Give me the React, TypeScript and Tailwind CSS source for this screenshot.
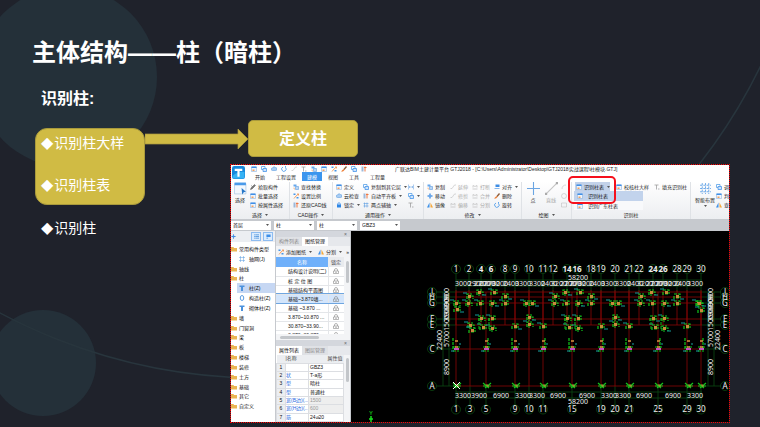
import React from 'react';
import clsx from 'clsx';

type Glyph =
  | 'window' | 'pencil' | 'copy' | 'cloud' | 'lock' | 'swap' | 'plates' | 'grid' | 'move'
  | 'mirror' | 'line' | 'cut' | 'align' | 'rotate' | 'brush' | 'text' | 'span' | 'find' | 'arc' | 'circle' | 'rect';

const glyphs: Record<Glyph, React.ReactNode> = {
  window: (
    <>
      <path d="M1 2h10v9H1z" fill="#eef5fd" stroke="#7fa9d8" />
      <path d="M1 1h10v3H1z" fill="#3f8fe8" />
      <path d="M3 7h4v3H3z" fill="#f3a15e" />
    </>
  ),
  pencil: <path d="M1 11l3-1 7-7-2-2-7 7zM2 3l3 2" fill="#777" stroke="#555" />,
  copy: (
    <>
      <path d="M1 1h7v6H1z" fill="#fff" stroke="#4d9be6" strokeWidth="1.5" />
      <path d="M4 5h7v6H4z" fill="#cfe5fa" stroke="#3f8fe8" strokeWidth="1.5" />
    </>
  ),
  cloud: <path d="M3 9a2.5 2.5 0 010-5 3.500 3.500 0 016-1 3 3 0 010 6z" fill="#a9cdf3" stroke="#4d93dc" />,
  lock: (
    <>
      <path d="M3.500 6V4a2.500 2.500 0 015 0v2" fill="none" stroke="#3f8fe8" strokeWidth="1.500" />
      <path d="M2 5h8v6H2z" fill="#2d86e6" />
    </>
  ),
  swap: (
    <>
      <path d="M1 1h4v3H1zM7 8h4v3H7z" fill="#4495e8" />
      <path d="M2 11l4-5 5-4M8 2h3v3" fill="none" stroke="#f08a3c" strokeWidth="1.500" />
    </>
  ),
  plates: (
    <>
      <path d="M1 1h4v10H1z" fill="#9cb9da" />
      <path d="M8 1v10M6 3h5" stroke="#ee7641" strokeWidth="2" />
    </>
  ),
  grid: <path d="M3 1v10M8 1v10M1 3h10M1 8h10" stroke="#5b9ce0" strokeWidth="1.200" fill="none" />,
  move: <path d="M6 0l2 3H7v2h2V4l3 2-3 2V7H7v2h1l-2 3-2-3h1V7H3v1L0 6l3-2v1h2V3H4z" fill="#3c8ce4" />,
  mirror: (
    <>
      <path d="M5 1v10H0z" fill="#3f91e8" />
      <path d="M7 1v10h5z" fill="#f6a83b" />
    </>
  ),
  line: <path d="M1 9h3l5-7M9 2h3" stroke="#b3b3b3" fill="none" />,
  cut: <path d="M1 10h10M2 7V3l4 2 4-2v4" stroke="#b3b3b3" fill="none" strokeWidth="1.200" />,
  align: (
    <>
      <path d="M3 1h8v5H3z" fill="#3c8ce4" />
      <path d="M1 8h10v2H1z" fill="#87b8ec" />
    </>
  ),
  rotate: <path d="M4 2a4.500 4.500 0 105 1M9 3V0" stroke="#4798e8" fill="none" strokeWidth="1.700" />,
  brush: (
    <>
      <path d="M5 6l5-6 2 2-5 6z" fill="#8b5a36" />
      <path d="M0 11l5-5 2 2-3 3z" fill="#ee7a2f" />
    </>
  ),
  text: <path d="M1 2h8M5 2v9M8 10h3" stroke="#999" strokeWidth="1.500" fill="none" />,
  span: <path d="M1 1v10M11 1v10M2 6h8M4 4L2 6l2 2M8 4l2 2-2 2" stroke="#5a9be0" fill="none" />,
  find: (
    <>
      <path d="M1 1h6v4H1z" fill="#64a7ec" />
      <path d="M5 5h6v6H5z" fill="#b7d5f5" stroke="#4b8fd9" />
      <path d="M2 7v3h2" stroke="#f08a3c" fill="none" />
    </>
  ),
  arc: <path d="M2 10c0-5 3-8 8-8" stroke="#b5b5b5" fill="none" />,
  circle: <circle cx="6" cy="6" r="5" stroke="#b5b5b5" fill="none" />,
  rect: <path d="M1 2h10v8H1z" stroke="#b5b5b5" fill="none" />,
};

const Icon: React.FC<{ name: Glyph; className?: string }> = ({ name, className }) => (
  <svg viewBox="0 0 12 12" className={clsx('shrink-0', className ?? 'size-[6px]')} aria-hidden="true">
    {glyphs[name]}
  </svg>
);

const Caret = () => (
  <svg viewBox="0 0 6 4" className="ml-px h-[2px] w-[3px] shrink-0" aria-hidden="true">
    <path d="M0 0h6L3 4z" fill="#555" />
  </svg>
);

interface Command {
  icon: Glyph;
  label?: string;
  caret?: boolean;
  muted?: boolean;
}

const CommandColumn: React.FC<{ items: Command[]; className?: string }> = ({ items, className }) => (
  <div className={clsx('flex shrink-0 flex-col', className)}>
    {items.map((item, i) => (
      <button
        key={i}
        aria-label={item.label ?? item.icon}
        className={clsx('flex h-[9px] items-center gap-[2px] whitespace-nowrap', item.muted ? 'text-[#aaa]' : 'text-[#1c1c1c]')}
      >
        <Icon name={item.icon} />
        {item.label}
        {item.caret && <Caret />}
      </button>
    ))}
  </div>
);

const Group: React.FC<{ title: string; caret?: boolean; className: string; children: React.ReactNode }> = ({
  title,
  caret,
  className,
  children,
}) => (
  <div className={clsx('flex shrink-0 flex-col border-r border-[#dfe2e6]', className)}>
    <div className="flex h-[28px] px-[3px]">{children}</div>
    <div className="flex h-[9px] items-center justify-center gap-[2px] text-[#1c1c1c]">
      {title}
      {caret && <Caret />}
    </div>
  </div>
);

const tabs = ['开始', '工程设置', '建模', '视图', '工具', '工程量'];
const quickIcons: Glyph[] = ['window', 'copy', 'cloud', 'rotate', 'line', 'text', 'find', 'window', 'swap', 'brush', 'copy', 'plates'];

const TitleBar = () => (
  <div className="flex h-[16px] bg-white">
    <svg viewBox="0 0 24 24" className="ml-px mt-px size-[13px] shrink-0" aria-hidden="true">
      <rect width="24" height="24" rx="4" fill="#1688dc" />
      <path d="M1 18q11-9 22-7v9q0 3-3 3H4q-3 0-3-3z" fill="#36b2f4" />
      <path d="M5 5h14v4h-5v11h-4V9H5z" fill="#fff" />
    </svg>
    <div className="flex min-w-0 flex-1 flex-col">
      <div className="flex h-[7px] items-center">
        <div className="flex w-[150px] shrink-0 items-start gap-[4px] pl-[6px]">
          {quickIcons.map((name, i) => (
            <Icon key={i} name={name} />
          ))}
        </div>
        <div className="whitespace-nowrap leading-[6px] text-[#1c1c1c]">
          广联达BIM土建计量平台 GTJ2018 - [C:\Users\Administrator\Desktop\GTJ2018实战课程\柱模块.GTJ]
        </div>
      </div>
      <nav className="flex h-[9px] gap-px pl-[5px]">
        {tabs.map((tab) => (
          <button
            key={tab}
            className={clsx('px-[5px] leading-[8px]', tab === '建模' ? 'bg-[#3b95ee] text-white' : 'text-[#333]')}
          >
            {tab}
          </button>
        ))}
      </nav>
    </div>
  </div>
);

const RecognizeMenu = () => (
  <div className="relative w-[41px] shrink-0 whitespace-nowrap">
    <button className="flex h-[9px] w-[35px] items-center gap-[2px] bg-[#c3d2e9] pl-px text-[#111]">
      <Icon name="window" />
      识别柱表
      <Caret />
    </button>
    <div className="absolute -left-px top-[9px] z-10 w-[69px] bg-[#f8f9fb]">
      <button className="flex h-[10px] w-full items-center gap-[5px] bg-[#c2d3ec] pl-[3px] text-[#111]">
        <Icon name="window" />
        识别柱表
      </button>
      <button className="flex h-[9px] w-full items-center gap-[5px] pl-[3px] text-[#1c1c1c]">
        <Icon name="window" />
        识别广东柱表
      </button>
    </div>
    <div className="absolute -left-[7px] -top-[6px] z-20 h-[28px] w-[48px] rounded-[5px] border-2 border-[#f5101c]" />
  </div>
);

const Ribbon = () => (
  <div className="flex h-[38px] bg-linear-to-b from-white to-[#eceef1] pt-px">
    <Group title="选择" caret className="w-[59px]">
      <button className="mr-[4px] flex w-[12px] flex-col items-center gap-[2px] whitespace-nowrap text-[#1c1c1c]">
        <svg viewBox="0 0 24 24" className="size-[13px]" aria-hidden="true">
          <path d="M1 3h21v19H1z" fill="#f3f8fd" stroke="#92b8df" />
          <path d="M1 1h21v5H1z" fill="#4a9aea" />
          <path d="M14 11l8 7-4 1-3 4z" fill="#2878c8" />
        </svg>
        选择
      </button>
      <CommandColumn
        items={[
          { icon: 'pencil', label: '拾取构件' },
          { icon: 'window', label: '批量选择' },
          { icon: 'window', label: '按属性选择' },
        ]}
      />
    </Group>
    <Group title="CAD操作" caret className="w-[43px]">
      <CommandColumn
        items={[
          { icon: 'find', label: '查找替换' },
          { icon: 'swap', label: '设置比例' },
          { icon: 'plates', label: '还原CAD线' },
        ]}
      />
    </Group>
    <Group title="通用操作" caret className="w-[91px]">
      <CommandColumn
        className="w-[27px]"
        items={[
          { icon: 'window', label: '定义' },
          { icon: 'cloud', label: '云检查' },
          { icon: 'lock', label: '锁定', caret: true },
        ]}
      />
      <CommandColumn
        className="w-[45px]"
        items={[
          { icon: 'copy', label: '复制到其它层', caret: true },
          { icon: 'plates', label: '自动平齐板', caret: true },
          { icon: 'grid', label: '两点辅轴', caret: true },
        ]}
      />
      <CommandColumn items={[{ icon: 'span', caret: true }, { icon: 'copy', caret: true }, { icon: 'text' }]} />
    </Group>
    <Group title="修改" caret className="w-[98px]">
      <CommandColumn
        className="w-[23px]"
        items={[
          { icon: 'find', label: '复制' },
          { icon: 'move', label: '移动' },
          { icon: 'mirror', label: '镜像' },
        ]}
      />
      <CommandColumn
        className="w-[22px]"
        items={[
          { icon: 'line', label: '延伸', muted: true },
          { icon: 'line', label: '修剪', muted: true },
          { icon: 'cut', label: '偏移', muted: true },
        ]}
      />
      <CommandColumn
        className="w-[22px]"
        items={[
          { icon: 'cut', label: '打断', muted: true },
          { icon: 'cut', label: '合并', muted: true },
          { icon: 'cut', label: '分割', muted: true },
        ]}
      />
      <CommandColumn
        items={[
          { icon: 'align', label: '对齐', caret: true },
          { icon: 'brush', label: '删除' },
          { icon: 'rotate', label: '旋转' },
        ]}
      />
    </Group>
    <Group title="绘图" caret className="w-[50px]">
      <button className="flex w-[16px] shrink-0 flex-col items-center gap-[2px] text-[#1c1c1c]">
        <svg viewBox="0 0 12 12" className="size-[13px]" aria-hidden="true">
          <path d="M6 0v12M0 6h12" stroke="#6aa5e2" />
        </svg>
        点
      </button>
      <button className="flex w-[20px] shrink-0 flex-col items-center gap-[2px] whitespace-nowrap text-[#aaa]">
        <svg viewBox="0 0 12 12" className="size-[13px]" aria-hidden="true">
          <path d="M1 11L11 1" stroke="#c4c4c4" />
          <path d="M0 10h2v2H0zM10 0h2v2h-2z" fill="#aaa" />
        </svg>
        直线
      </button>
      <CommandColumn items={[{ icon: 'arc' }, { icon: 'circle' }, { icon: 'rect' }]} />
    </Group>
    <Group title="识别柱" className="w-[119px]">
      <RecognizeMenu />
      <CommandColumn className="w-[38px]" items={[{ icon: 'window', label: '校核柱大样' }]} />
      <CommandColumn items={[{ icon: 'text', label: '填充识别柱' }]} />
    </Group>
    <div className="flex min-w-0 flex-1 overflow-hidden pl-[3px]">
      <button className="flex w-[22px] shrink-0 flex-col items-center gap-[2px] whitespace-nowrap text-[#1c1c1c]">
        <svg viewBox="0 0 12 12" className="size-[13px]" aria-hidden="true">
          <path d="M1 3h10M1 6h10M1 9h10M3 1v10M6 1v10M9 1v10" stroke="#5c9fe6" strokeWidth=".8" strokeDasharray="2 1" />
        </svg>
        智能布置
        <Caret />
      </button>
      <CommandColumn
        items={[
          { icon: 'copy', label: '调' },
          { icon: 'window', label: '判' },
          { icon: 'mirror', label: '查' },
        ]}
      />
    </div>
  </div>
);

const selectors = [
  { label: '楼层', value: '首层' },
  { label: '类别', value: '柱' },
  { label: '类型', value: '柱' },
  { label: '构件', value: 'GBZ3' },
];

const SelectorBar = () => (
  <div className="flex h-[12px] items-center gap-[3px] bg-[#c6c9ce]">
    {selectors.map((s) => (
      <label key={s.label} className="relative flex">
        <select aria-label={s.label} className="h-[9px] w-[40px] appearance-none bg-white pl-[2px] leading-[9px] text-[#111]">
          <option>{s.value}</option>
        </select>
        <span className="pointer-events-none absolute inset-y-0 right-[2px] flex items-center">
          <Caret />
        </span>
      </label>
    ))}
  </div>
);

interface TreeRow {
  label: string;
  leaf?: 'grid' | 'column' | 'ring';
}

const treeRows: TreeRow[] = [
  { label: '常用构件类型' },
  { label: '轴网(J)', leaf: 'grid' },
  { label: '轴线' },
  { label: '柱' },
  { label: '柱(Z)', leaf: 'column' },
  { label: '构造柱(Z)', leaf: 'ring' },
  { label: '砌体柱(Z)', leaf: 'column' },
  { label: '墙' },
  { label: '门窗洞' },
  { label: '梁' },
  { label: '板' },
  { label: '楼梯' },
  { label: '装修' },
  { label: '土方' },
  { label: '基础' },
  { label: '其它' },
  { label: '自定义' },
];

const TreeIcon: React.FC<{ leaf?: TreeRow['leaf'] }> = ({ leaf }) => (
  <svg viewBox="0 0 12 12" className="size-[6px] shrink-0" aria-hidden="true">
    {!leaf && <path d="M0 2h5l1 2h6v7H0z" fill="#eab654" />}
    {leaf === 'grid' && <path d="M3 0v12M9 0v12M0 3h12M0 9h12" stroke="#5b9ce0" fill="none" />}
    {leaf === 'column' && <path d="M1 1h10v3H8v8H4V4H1z" fill="#4c92dd" />}
    {leaf === 'ring' && <ellipse cx="6" cy="6" rx="3.500" ry="5" fill="none" stroke="#5b9ce0" strokeWidth="2" />}
  </svg>
);

const ComponentTree = () => (
  <aside className="flex w-[44px] shrink-0 flex-col bg-white">
    <div className="flex h-[11px] shrink-0 items-center justify-end gap-[2px] bg-[#eceef2] pr-[2px]">
      <Icon name="move" className="mr-auto size-[5px]" />
      {[0, 1].map((i) => (
        <button key={i} aria-label={i ? '图标' : '列表'} className="flex h-[9px] w-[10px] items-center justify-center border border-[#8ebcf0] bg-[#dcecfd]">
          <svg viewBox="0 0 12 12" className="size-[5px]" aria-hidden="true">
            {i ? <path d="M1 1h10v6H1zM1 9h4v2H1z" fill="#3f8fe8" /> : <path d="M0 2h12M0 6h12M0 10h12" stroke="#4d93dc" strokeWidth="2" strokeDasharray="2 1 9" />}
          </svg>
        </button>
      ))}
    </div>
    <ul className="flex flex-1 flex-col pb-[11px] pt-[2px]">
      {treeRows.map((row) => (
        <li
          key={row.label}
          className={clsx(
            'flex flex-1 items-center whitespace-nowrap leading-[8px] text-[#111]',
            row.leaf ? 'ml-[6px] gap-[4px] pl-[2px]' : 'gap-[2px]',
            row.label === '柱(Z)' && 'bg-[#c6d7f3]',
          )}
        >
          <TreeIcon leaf={row.leaf} />
          {row.label}
        </li>
      ))}
    </ul>
  </aside>
);

const PanelHead: React.FC<{ titles: string[]; active: number }> = ({ titles, active }) => (
  <>
    <div className="flex h-[6px] shrink-0 items-center justify-end bg-[#d4d7dd] pr-[3px]">
      <button aria-label="关闭" className="leading-[5px] text-[#666]">×</button>
    </div>
    <div className="flex h-[9px] shrink-0 bg-[#e6e8ec]">
      {titles.map((t, i) => (
        <button
          key={t}
          className={clsx('px-[3px] leading-[9px]', i === active ? 'bg-white text-[#111]' : 'bg-[#dfe1e5] text-[#888]')}
        >
          {t}
        </button>
      ))}
    </div>
  </>
);

const sheets = ['结构设计说明(二)', '桩 定 位 图', '基础结构平面图', '基础~3.870墙...', '基础 ~3.870 ...', '3.870~10.870 ...', '30.870~33.90...', '3.870~30.870'];

const properties = [
  ['', 'GBZ3'],
  ['状', 'T-a形'],
  ['型', '暗柱'],
  ['型', '普通柱'],
  ['宽(B边)(...', '1500'],
  ['宽(H边)(...', '600'],
  ['筋', '24⌀20'],
];

const Scrollbar: React.FC<{ thumb: string }> = ({ thumb }) => (
  <div className="flex w-[6px] shrink-0 flex-col items-center bg-[#f3f4f6]">
    <span className="h-[3px] w-[3px]" />
    <span className={clsx('w-[3px] rounded-full bg-[#c3c6ca]', thumb)} />
  </div>
);

const SheetPanel = () => (
  <section className="flex h-[109px] shrink-0 flex-col bg-white">
    <PanelHead titles={['构件列表', '图纸管理']} active={1} />
    <div className="flex h-[11px] shrink-0 items-center gap-[2px] whitespace-nowrap bg-[#f2f3f5] pl-[2px] text-[#1c1c1c]">
      <Icon name="swap" />
      添加图纸
      <Caret />
      <Icon name="mirror" className="ml-[4px] size-[6px]" />
      分割
      <Caret />
      <span className="ml-auto pr-px">»</span>
    </div>
    <div className="flex min-h-0 flex-1 overflow-hidden">
      <table className="flex-1 table-fixed border-collapse self-start">
        <thead>
          <tr className="h-[10px]">
            <th className="w-[52px] bg-[#6fb0fa] font-normal leading-[10px] text-white">名称</th>
            <th className="bg-[#e9ebee] font-normal leading-[10px] text-[#444]">锁定</th>
          </tr>
        </thead>
        <tbody>
          {sheets.map((sheet, i) => (
            <tr key={sheet} className={clsx('h-[9px]', i === 3 && 'bg-[#d3e5fb] outline outline-[#6fa6e0]')}>
              <td className="overflow-hidden whitespace-nowrap border-b border-[#e4e6e9] pl-[12px] leading-[8px] text-[#111]">{sheet}</td>
              <td className="border-b border-l border-[#e4e6e9]">
                <svg viewBox="0 0 12 12" className="mx-auto size-[6px]" aria-hidden="true">
                  <path d="M3 6V4a3 3 0 016 0v2M1 6h10v5H1zM4 8.500h4" fill="none" stroke="#888" strokeWidth="1.200" />
                </svg>
              </td>
            </tr>
          ))}
        </tbody>
      </table>
      <Scrollbar thumb="mt-px h-[22px]" />
    </div>
    <div className="flex h-[6px] shrink-0 items-center bg-[#f3f4f6] pl-[4px]">
      <span className="h-[3px] w-[39px] rounded-full bg-[#c3c6ca]" />
    </div>
  </section>
);

const PropertyPanel = () => (
  <section className="flex flex-1 flex-col bg-white">
    <PanelHead titles={['属性列表', '图层管理']} active={0} />
    <div className="flex flex-1">
      <div className="flex flex-1 flex-col">
        <table className="w-full flex-1 table-fixed border-collapse whitespace-nowrap leading-[7px] text-[#111]">
          <thead>
            <tr className="h-[8px] bg-[#eceef1] text-[#444]">
              <th className="w-[9px]" />
              <th className="w-[23px] text-left font-normal">|名称</th>
              <th className="overflow-hidden pr-px text-right font-normal">属性值</th>
            </tr>
          </thead>
          <tbody>
            {properties.map(([name, value], i) => (
              <tr key={i} className="h-[8px]">
                <td className="border border-[#dcdee2] bg-[#eceef1] text-center">{i + 1}</td>
                <td className="overflow-hidden border border-[#dcdee2] text-[#2468e0]">{name}</td>
                <td className={clsx('border border-[#dcdee2] pl-px', (i === 4 || i === 5) && 'bg-[#eee] text-[#999]')}>{value}</td>
              </tr>
            ))}
          </tbody>
        </table>
      </div>
      <Scrollbar thumb="h-[24px]" />
    </div>
  </section>
);

// Plan of the axis grid, in drawing units
const topAxes: [string, number][] = [
  ['1', 456], ['2', 469], ['4', 481], ['6', 491], ['8', 505], ['9', 515], ['10', 529], ['11', 543], ['12', 553],
  ['14', 567], ['16', 577], ['18', 591], ['19', 601], ['20', 615], ['21', 629], ['22', 639], ['24', 653], ['26', 663],
  ['28', 677], ['29', 687], ['30', 701],
];
const bottomAxes: [string, number][] = [
  ['1', 456], ['3', 470], ['5', 486], ['9', 515], ['10', 529], ['11', 543], ['15', 572], ['19', 601], ['20', 615],
  ['21', 629], ['25', 658], ['29', 687], ['30', 701],
];
const sideAxes: [string, number][] = [
  ['J', 292], ['H', 297], ['G', 303], ['F', 319], ['E', 325], ['C', 349], ['A', 386],
];
const doubled = ['4', '6', '14', '16', '24', '26'];

const topSpans: [string, number][] = [
  ['3000', 463], ['2900', 476], ['2700', 482], ['2700', 487], ['2700', 492], ['3200', 500], ['2400', 511], ['3300', 523],
  ['3300', 537], ['2400', 549], ['3200', 559], ['2700', 568], ['2700', 573], ['2700', 578], ['3200', 586], ['2400', 597],
  ['3300', 609], ['3300', 623], ['2400', 635], ['3200', 645], ['2700', 654], ['2700', 659], ['2700', 664], ['3200', 672],
  ['2400', 682], ['3300', 695],
];
const bottomSpans: [string, number][] = [
  ['3300', 463], ['3900', 479], ['6900', 501], ['3300', 523], ['3300', 537], ['6900', 558], ['6900', 587], ['3300', 609],
  ['3300', 623], ['6900', 644], ['6900', 673], ['3300', 695],
];
const sideSpans: [string, number][] = [
  ['900', 294], ['900', 300], ['3600', 307], ['3900', 313], ['1500', 323], ['5700', 339], ['8900', 367],
];

const baySpots = [
  [479, 292], [494, 292], [469, 296], [505, 296], [468, 303], [480, 303], [492, 303], [505, 303], [526, 303], [532, 303],
  [481, 318], [492, 318], [529, 317], [483, 327], [492, 328], [515, 326], [529, 324], [543, 326],
];
const spots = [0, 86, 172]
  .flatMap((dx) => baySpots.map(([x, y]) => [x + dx, y]))
  .filter(([x]) => x < 700)
  .concat([[456, 303], [457, 309], [470, 325], [472, 330], [699, 303], [701, 310]]);

const lowerAxes = [456, 486, 515, 543, 572, 601, 629, 658, 688, 701];

const CadCanvas = () => (
  <svg
    viewBox="351 231 378 191"
    className="block min-w-0 flex-1 bg-black font-['Noto_Sans',sans-serif] text-[7px]"
    textAnchor="middle"
    fill="#f0f0f0"
  >
    <g stroke="#0b4a12" fill="none" strokeWidth=".8">
      {topAxes.map(([n, x]) => (
        <g key={n}>
          <path d={`M${x} 274V292`} />
          <circle cx={x} cy="269" r="4.500" />
        </g>
      ))}
      {bottomAxes.map(([n, x]) => (
        <g key={n}>
          <path d={`M${x} 386V405`} />
          <circle cx={x} cy="409.500" r="4.500" />
        </g>
      ))}
      {sideAxes.map(([n, y]) => (
        <g key={n}>
          <path d={`M437 ${y}H456M702 ${y}H721`} />
          <circle cx="432" cy={y} r="4.500" />
          <circle cx="725" cy={y} r="4.500" />
        </g>
      ))}
      <path d="M456 280H702M456 286H702M456 392H702M456 398H702M443 292V386M449 292V386M708 292V386M714 292V386" />
    </g>
    <g stroke="#8c0606" strokeWidth=".8">
      {sideAxes.map(([n, y]) => (
        <path key={n} d={`M456 ${y}H702`} />
      ))}
      {topAxes.map(([n, x]) => (
        <path key={n} d={`M${x} 290V325`} />
      ))}
      {bottomAxes.map(([n, x]) => (
        <path key={n} d={`M${x} 292V386`} />
      ))}
    </g>

    {spots.map(([x, y], i) => (
      <g key={i} fill="none">
        <path
          d={i % 2 ? `M${x - 3} ${y - 2}h6v4M${x - 1} ${y + 2}h4M${x - 3} ${y}v3` : `M${x - 2} ${y + 3}v-5h5M${x + 2} ${y}h2v3M${x - 1} ${y + 3}h2`}
          stroke="#12c81c"
          strokeWidth="1.200"
          strokeDasharray="3 1"
        />
        <path d={`M${x - 1} ${y - 1}h3v3h-3z`} fill="#c98a3c" />
        <path d={i % 3 ? `M${x - 6} ${y - 3}h4` : `M${x + 3} ${y + 3}h4`} stroke="#159a9a" />
      </g>
    ))}
    {[479, 489, 565, 575, 651, 661].map((x) => (
      <path key={x} d={`M${x} 318v11`} stroke="#10b81a" strokeDasharray="3 1" />
    ))}
    {lowerAxes.map((x, i) => (
      <g key={x} fill="none">
        <path
          d={`M${x + (i % 2 ? 2 : -3)} 338v12M${x - 3} 347h7M${x - 3} 351h6`}
          stroke="#10c81a"
          strokeWidth="1.200"
          strokeDasharray="3 1"
        />
        <path d={`M${x - 2} 349h5`} stroke="#d65ad8" strokeWidth="1.800" />
        <path d={`M${x - 1} 341h3M${x - 1} 347h3`} stroke="#d99440" strokeWidth="1.500" />
        <path d={`M${x - 5} 351h3M${x + 3} 344h2`} stroke="#18a6a6" />
        <path d={`M${x - 3} 383l6 5m2-5l-6 5M${x - 3} 386h8`} stroke="#16c41c" strokeWidth="1.200" />
        <path d={`M${x} 385h2v2`} stroke="#c98a3c" />
      </g>
    ))}
    <path d="M453 382l7 7m0-7l-7 7" stroke="#fff" />

    <g className="text-[8px]">
      {topAxes.map(([n, x]) => (
        <text key={n} x={x} y="272" className={clsx(doubled.includes(n) && 'font-bold')}>{n}</text>
      ))}
      {bottomAxes.map(([n, x]) => (
        <text key={n} x={x} y="412">{n}</text>
      ))}
      {sideAxes.map(([n, y]) => (
        <g key={n}>
          <text x="432" y={y + 3}>{n}</text>
          <text x="725" y={y + 3}>{n}</text>
        </g>
      ))}
    </g>
    {topSpans.map(([n, x]) => (
      <text key={x} x={x} y="286">{n}</text>
    ))}
    {bottomSpans.map(([n, x]) => (
      <text key={x} x={x} y="398">{n}</text>
    ))}
    {sideSpans.map(([n, y]) => (
      <g key={y}>
        <text transform={`translate(449 ${y}) rotate(-90)`}>{n}</text>
        <text transform={`translate(713 ${y}) rotate(-90)`}>{n}</text>
      </g>
    ))}
    <text transform="translate(442 340) rotate(-90)">22400</text>
    <text transform="translate(720 340) rotate(-90)">22400</text>
    <text x="578" y="280">58200</text>
    <text x="578" y="404">58200</text>

    <text x="371" y="415" fill="#19e01f" className="text-[6px]">Y</text>
    <path d="M371 416v6M369 419h4" stroke="#19e01f" strokeWidth="1.500" />
  </svg>
);

const ModelerWindow = () => (
  <div className="mr-[30px] mt-[7px] overflow-hidden border border-dotted border-[#f00] bg-[#1f222b] text-[5px] leading-[6px]">
    <TitleBar />
    <Ribbon />
    <SelectorBar />
    <div className="flex bg-[#c6c9ce]">
      <ComponentTree />
      <div className="ml-px mr-px flex w-[74px] shrink-0 flex-col">
        <SheetPanel />
        <PropertyPanel />
      </div>
      <CadCanvas />
    </div>
  </div>
);

const Backdrop = () => (
  <svg className="absolute inset-0 size-full" viewBox="0 0 760 427" preserveAspectRatio="xMinYMin slice" aria-hidden="true">
    <circle cx="67" cy="77" r="90" fill="#243039" />
    <circle cx="43" cy="363" r="53" fill="#243039" />
    <circle cx="261" cy="-178" r="556" fill="none" stroke="#28353d" strokeWidth="1.500" />
  </svg>
);

const Step: React.FC<{ children: React.ReactNode }> = ({ children }) => (
  <li className="flex items-center gap-px whitespace-nowrap text-sm leading-[20px]">
    <span className="font-['DejaVu_Sans'] text-base leading-[20px]">◆</span>
    {children}
  </li>
);

const App: React.FC = () => {
  return (
    <main className="relative min-h-screen overflow-hidden bg-[#1f222b] pt-[37px] font-['Liberation_Sans','Noto_Sans_CJK_SC',sans-serif] text-white">
      <Backdrop />
      <div className="relative">
        <h1 className="pl-8 text-2xl font-bold leading-8">主体结构——柱（暗柱）</h1>
        <h2 className="mt-[18px] pl-[41px] text-base font-bold leading-6">识别柱:</h2>

        <div className="mt-[9px] flex pl-[35px]">
          {/* Steps */}
          <div className="w-[110px] shrink-0 pt-[8px]">
            <ul className="flex flex-col gap-[22px] rounded-xl border border-[#a99a3c] bg-[#d0bb44] pb-[9px] pl-[5px] pt-[4px]">
              <Step>识别柱大样</Step>
              <Step>识别柱表</Step>
            </ul>
            <ul className="mt-[13px] pl-[6px]">
              <Step>识别柱</Step>
            </ul>
          </div>

          <div className="min-w-0 flex-1">
            <div className="flex h-[37px] items-center">
              <svg viewBox="0 0 103 22" className="h-[22px] w-[103px] shrink-0" aria-hidden="true">
                <path d="M0 6h93V1l10 10-10 10v-5H0z" fill="#d0bb44" stroke="#a99a3c" strokeWidth=".7" />
              </svg>
              <div className="flex h-full w-[110px] items-center justify-center rounded-[5px] border border-[#a99a3c] bg-[#d0bb44] text-base font-bold">
                定义柱
              </div>
            </div>
            <div className="pl-[85px]">
              <ModelerWindow />
            </div>
          </div>
        </div>
      </div>
    </main>
  );
};

export default App;
